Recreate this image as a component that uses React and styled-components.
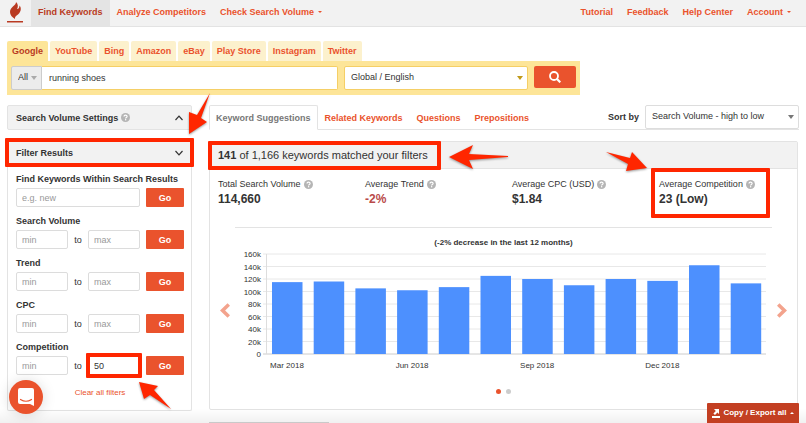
import React, { useState } from "react";
import styled, { createGlobalStyle, css } from "styled-components";

const colors = {
    accent: "#ea532d",
    dark: "#b93a22",
    mark: "#ff2600",
    text: "#333",
    line: "#e3e3e3",
};

const GlobalStyle = createGlobalStyle`
    * {
        box-sizing: border-box;
    }
    body {
        margin: 0;
        background: #fff;
        color: ${colors.text};
        font-family: "Liberation Sans", Arial, sans-serif;
        font-size: 9px;
        line-height: 12px;
    }
    button, input, select {
        font: inherit;
        color: inherit;
        margin: 0;
    }
    a {
        color: ${colors.accent};
        text-decoration: none;
    }
`;

const Header = styled.header`
    display: flex;
    height: 27px;
    padding-left: 7px;
    background: #f2f2f2;
    border-bottom: 1px solid ${colors.line};
`;

const Logo = styled.a`
    display: flex;
    width: 24px;
`;

const Nav = styled.nav`
    display: flex;
    margin-left: ${props => props.$right ? "auto" : "0"};
    padding-right: ${props => props.$right ? "8px" : "0"};
`;

const NavLink = styled.a`
    display: flex;
    align-items: center;
    gap: 4px;
    padding: 0 7px 2px;
    font-weight: bold;
    ${props => props.$active && css`
        color: ${colors.dark};
        background: #e4e4e4;
    `}
`;

const Caret = styled.span`
    border: 2px solid transparent;
    ${props => props.$up ? "border-bottom-color" : "border-top-color"}: currentColor;
    margin-top: ${props => props.$up ? "-2px" : "2px"};
`;

const Page = styled.main`
    padding: 14px 7px 0;
`;

const SearchForm = styled.form`
    max-width: 573px;
    margin-bottom: 10px;
`;

const EngineTabs = styled.div`
    display: flex;
    gap: 2px;
`;

const EngineTab = styled.button`
    height: 20px;
    padding: 0 5px;
    border: 0;
    border-radius: 2px 2px 0 0;
    font-weight: bold;
    color: ${props => props.$active ? colors.dark : colors.accent};
    background: ${props => props.$active ? "#fde598" : "#fcf1cd"};
`;

const SearchBar = styled.div`
    display: grid;
    grid-template-columns: 327px 1fr 42px;
    gap: 6px;
    padding: 5px 4px;
    background: #fde598;
`;

const QueryGroup = styled.div`
    display: flex;
`;

const SelectWrap = styled.span`
    position: relative;
    display: block;
    flex: none;
    &::after {
        content: "";
        position: absolute;
        right: 5px;
        top: 10px;
        border: 3px solid transparent;
        border-top: 4px solid ${props => props.$arrow};
        border-bottom: 0;
        pointer-events: none;
    }
`;

const Select = styled.select`
    appearance: none;
    display: block;
    width: 100%;
    height: 24px;
    padding: 0 12px 2px 6px;
    border: 1px solid ${props => props.$border};
    border-radius: ${props => props.$joined ? "2px 0 0 2px" : "2px"};
    background: ${props => props.$joined ? "#ececec" : "#fff"};
`;

const QueryInput = styled.input`
    flex: 1;
    min-width: 0;
    height: 24px;
    padding: 0 7px 1px;
    border: 1px solid #f5cf66;
    border-left: 0;
    border-radius: 0 2px 2px 0;
`;

const SearchButton = styled.button`
    display: flex;
    align-items: center;
    justify-content: center;
    height: 22px;
    padding: 0;
    border: 0;
    border-radius: 2px;
    color: #fff;
    background: ${colors.accent};
`;

const Columns = styled.div`
    display: grid;
    grid-template-columns: 185px minmax(0, 1fr);
    gap: 17px;
    align-items: start;
`;

const marked = css`
    position: relative;
    &::before {
        content: "";
        position: absolute;
        inset: ${props => props.$inset || "-2px"};
        border: 4px solid ${colors.mark};
        border-radius: 1px;
        pointer-events: none;
    }
`;

const PanelToggle = styled.button`
    display: flex;
    align-items: center;
    gap: 3px;
    width: 100%;
    height: 25px;
    padding: 0 8px;
    border: 1px solid ${colors.line};
    border-radius: 2px;
    font-weight: bold;
    text-align: left;
    background: #f2f2f2;
    svg:last-of-type {
        margin-left: auto;
    }
`;

const MarkedToggle = styled.div`
    ${marked}
`;

const FilterPanel = styled.section`
    margin-top: 10px;
    border: 1px solid ${colors.line};
    border-top: 0;
    border-radius: 2px;
    ${PanelToggle} {
        padding: 0 7px;
    }
`;

const Filters = styled.form`
    display: flex;
    flex-direction: column;
    gap: 8px;
    padding: 8px 7px 11px 8px;
`;

const FilterGroup = styled.fieldset`
    min-width: 0;
    margin: 0;
    padding: 0;
    border: 0;
`;

const FilterTitle = styled.legend`
    padding: 0 0 3px;
    font-weight: bold;
`;

const FilterRow = styled.div`
    display: flex;
    align-items: center;
`;

const Field = styled.span`
    display: flex;
    flex: 1;
    min-width: 0;
    ${props => props.$marked && marked}
`;

const FilterInput = styled.input`
    width: 100%;
    height: 19px;
    padding: 0 5px;
    border: 1px solid #dcdcdc;
    border-radius: 2px;
    background: #fff;
    &::placeholder {
        color: #999;
    }
`;

const To = styled.span`
    width: 20px;
    text-align: center;
`;

const GoButton = styled.button`
    width: 38px;
    height: 19px;
    margin-left: 6px;
    padding: 0;
    border: 0;
    border-radius: 1px;
    color: #fff;
    font-weight: bold;
    background: ${colors.accent};
`;

const ClearLink = styled.a`
    align-self: center;
    margin-top: 4px;
    font-size: 8px;
`;

const ResultBar = styled.div`
    display: flex;
    height: 25px;
    margin-bottom: 11px;
    border-bottom: 1px solid ${colors.line};
`;

const ResultTab = styled.a`
    display: flex;
    align-items: center;
    padding: 0 6px;
    margin-bottom: -1px;
    border: 1px solid transparent;
    border-radius: 2px 2px 0 0;
    font-weight: bold;
    ${props => props.$active && css`
        color: #777;
        background: #fff;
        border-color: ${colors.line};
        border-bottom-color: #fff;
    `}
`;

const SortLabel = styled.label`
    display: flex;
    align-items: center;
    gap: 6px;
    margin-left: auto;
    font-weight: bold;
    ${SelectWrap} {
        width: 154px;
        font-weight: normal;
    }
`;

const Panel = styled.section`
    margin-right: 1px;
    border: 1px solid ${colors.line};
    border-radius: 2px;
`;

const PanelTitle = styled.h1`
    display: flex;
    align-items: center;
    height: 27px;
    margin: 0;
    border-bottom: 1px solid ${colors.line};
    background: #f2f2f2;
    font-size: 11px;
    font-weight: normal;
`;

const MarkedTitle = styled.span`
    ${marked}
    padding: 6px 11px 7px 8px;
`;

const Stats = styled.dl`
    display: grid;
    grid-template-columns: repeat(3, 1fr) 138px;
    margin: 0;
    padding: 8px 0 20px 8px;
`;

const Stat = styled.div`
    justify-self: start;
    ${props => props.$marked && marked}
    dt {
        display: flex;
        align-items: center;
        gap: 3px;
        line-height: 14px;
    }
    dd {
        margin: 0;
        font-size: 12px;
        line-height: 16px;
        font-weight: bold;
        color: ${props => props.$down ? "#b94a48" : colors.text};
    }
`;

const Carousel = styled.div`
    display: flex;
    align-items: center;
    padding: 0 10px 15px;
`;

const CarouselButton = styled.button`
    display: flex;
    width: 10px;
    padding: 0;
    border: 0;
    background: none;
`;

const Slide = styled.div`
    flex: 1;
    min-width: 0;
    svg {
        display: block;
        width: 100%;
    }
`;

const SlideTitle = styled.h2`
    margin: 0 5px;
    padding: 9px 0 0;
    border-top: 1px solid ${colors.line};
    font-size: 8px;
    text-align: center;
`;

const Dots = styled.div`
    display: flex;
    justify-content: center;
    gap: 5px;
    padding-top: 18px;
`;

const Dot = styled.button`
    width: 5px;
    height: 5px;
    padding: 0;
    border: 0;
    border-radius: 50%;
    background: ${props => props.$active ? colors.accent : "#ccc"};
`;

const NextPanel = styled.div`
    width: 120px;
    height: 2px;
    margin-top: 12px;
    background: #d5d5d5;
`;

const BottomFade = styled.div`
    position: fixed;
    inset: auto 0 0;
    height: 14px;
    background: linear-gradient(rgba(0, 0, 0, 0), rgba(0, 0, 0, 0.06));
    pointer-events: none;
`;

const ChatButton = styled.button`
    position: fixed;
    left: 9px;
    bottom: 9px;
    display: flex;
    align-items: center;
    justify-content: center;
    width: 34px;
    height: 34px;
    padding: 0;
    border: 0;
    border-radius: 50%;
    background: ${colors.accent};
    box-shadow: 0 1px 14px rgba(0, 0, 0, 0.15);
`;

const ExportButton = styled.button`
    position: fixed;
    right: 7px;
    bottom: 0;
    display: flex;
    align-items: center;
    justify-content: center;
    gap: 3px;
    width: 92px;
    height: 20px;
    padding: 0;
    border: 0;
    border-radius: 1px 1px 0 0;
    color: #fff;
    font-size: 8px;
    font-weight: bold;
    background: #c33f22;
`;

const Arrow = styled.svg`
    position: absolute;
    left: ${props => props.$left};
    top: ${props => props.$top};
    fill: ${colors.mark};
    filter: drop-shadow(0 1px 1px rgba(0, 0, 0, 0.4));
    pointer-events: none;
`;

const engines = ["Google", "YouTube", "Bing", "Amazon", "eBay", "Play Store", "Instagram", "Twitter"];

const months = [
    { label: "Mar 2018", value: 115 },
    { value: 116 },
    { value: 105 },
    { label: "Jun 2018", value: 102 },
    { value: 107 },
    { value: 125 },
    { label: "Sep 2018", value: 120 },
    { value: 110 },
    { value: 120 },
    { label: "Dec 2018", value: 117 },
    { value: 142 },
    { value: 113 },
];

const HelpIcon = () => (
    <svg width="9" height="9" viewBox="0 0 18 18" aria-hidden="true">
        <circle cx="9" cy="9" r="9" fill="#b5b5b5" />
        <path d="M6 7.2C6 3.2 12.2 3.4 12.2 6.8C12.2 9 9.2 8.8 9.2 11" fill="none" stroke="#fff" strokeWidth="2.4" />
        <rect x="8" y="12.2" width="2.5" height="2.5" fill="#fff" />
    </svg>
);

const Chevron = ({ up }) => (
    <svg width="8" height="6" viewBox="0 0 8 6" fill="none" stroke="#333" strokeWidth="1.2" aria-hidden="true">
        <path d={up ? "M.5 5L4 1.2L7.5 5" : "M.5 1L4 4.8L7.5 1"} />
    </svg>
);

const SlideArrow = ({ next }) => (
    <svg width="10" height="15" viewBox="0 0 10 15" fill="none" stroke="#f3a38d" strokeWidth="3.6" aria-hidden="true">
        <path d={next ? "M1.2 1.5L7.4 7.5L1.2 13.5" : "M8.8 1.5L2.6 7.5L8.8 13.5"} />
    </svg>
);

const VolumeChart = () => {
    const ticks = [160, 140, 120, 100, 80, 60, 40, 20, 0];
    const y = (value) => 105 - value * 0.625;

    return (
        <svg viewBox="0 0 547 122" fontSize="8" fill="#333" role="img" aria-label="Search volume by month">
            {ticks.map(tick => (
                <g key={tick}>
                    <path d={`M33 ${y(tick)}H536`} stroke={tick ? "#e8e8e8" : "#ccc"} />
                    <text x="31" y={y(tick) + 3} textAnchor="end">{tick ? `${tick}k` : "0"}</text>
                </g>
            ))}
            <path d="M36.5 5V105" stroke="#ddd" />
            {months.map((month, i) => {
                const x = 42 + i * 41.7;
                return (
                    <g key={i}>
                        <rect x={x} y={y(month.value)} width="30.5" height={month.value * 0.625} fill="#4d90fe" />
                        {month.label && <text x={x + 15} y="119" textAnchor="middle">{month.label}</text>}
                    </g>
                );
            })}
        </svg>
    );
};

const RangeFilter = ({ title, max = "", highlight }) => {
    const [value, setValue] = useState(max);

    return (
        <FilterGroup>
            <FilterTitle>{title}</FilterTitle>
            <FilterRow>
                <Field><FilterInput placeholder="min" aria-label={`${title} min`} /></Field>
                <To>to</To>
                <Field $marked={highlight} $inset="-3px -2px">
                    <FilterInput
                        placeholder="max"
                        aria-label={`${title} max`}
                        value={value}
                        onChange={e => setValue(e.target.value)}
                    />
                    {highlight && (
                        <Arrow $left="50px" $top="25px" width="34" height="30">
                            <path d="M1 1L20 5L16 9L33 28L12 14L6 18Z" />
                        </Arrow>
                    )}
                </Field>
                <GoButton type="button">Go</GoButton>
            </FilterRow>
        </FilterGroup>
    );
};

const Sidebar = () => (
    <aside>
        <PanelToggle type="button">
            Search Volume Settings <HelpIcon />
            <Chevron up />
        </PanelToggle>
        <FilterPanel>
            <MarkedToggle $inset="-2px -3px">
                <PanelToggle type="button">Filter Results <Chevron /></PanelToggle>
                <Arrow $left="180px" $top="-48px" width="24" height="44">
                    <path d="M22 1L9 23L1 20L1 42L19 30L13 26Z" />
                </Arrow>
            </MarkedToggle>
            <Filters>
                <FilterGroup>
                    <FilterTitle>Find Keywords Within Search Results</FilterTitle>
                    <FilterRow>
                        <Field><FilterInput placeholder="e.g. new" aria-label="Find keywords within search results" /></Field>
                        <GoButton type="button">Go</GoButton>
                    </FilterRow>
                </FilterGroup>
                <RangeFilter title="Search Volume" />
                <RangeFilter title="Trend" />
                <RangeFilter title="CPC" />
                <RangeFilter title="Competition" max="50" highlight />
                <ClearLink href="#clear">Clear all filters</ClearLink>
            </Filters>
        </FilterPanel>
    </aside>
);

const Results = () => (
    <div>
        <ResultBar>
            <ResultTab href="#suggestions" $active>Keyword Suggestions</ResultTab>
            <ResultTab href="#related">Related Keywords</ResultTab>
            <ResultTab href="#questions">Questions</ResultTab>
            <ResultTab href="#prepositions">Prepositions</ResultTab>
            <SortLabel>
                Sort by
                <SelectWrap $arrow="#777">
                    <Select $border="#ddd"><option>Search Volume - high to low</option></Select>
                </SelectWrap>
            </SortLabel>
        </ResultBar>
        <Panel>
            <PanelTitle>
                <MarkedTitle>
                    <b>141</b> of 1,166 keywords matched your filters
                    <Arrow $left="238px" $top="1px" width="62" height="26">
                        <path d="M1 13L25 1L21 10L60 12L60 13L21 16L25 25Z" />
                    </Arrow>
                </MarkedTitle>
            </PanelTitle>
            <Stats>
                <Stat>
                    <dt>Total Search Volume <HelpIcon /></dt>
                    <dd>114,660</dd>
                </Stat>
                <Stat $down>
                    <dt>Average Trend <HelpIcon /></dt>
                    <dd>-2%</dd>
                </Stat>
                <Stat>
                    <dt>Average CPC (USD) <HelpIcon /></dt>
                    <dd>$1.84</dd>
                </Stat>
                <Stat $marked $inset="-9px -15px -11px -8px">
                    <dt>Average Competition <HelpIcon /></dt>
                    <dd>23 (Low)</dd>
                    <Arrow $left="-54px" $top="-26px" width="44" height="22">
                        <path d="M1 1L25 7L27 1L42 17L21 20L23 13Z" />
                    </Arrow>
                </Stat>
            </Stats>
            <Carousel>
                <CarouselButton type="button" aria-label="Previous"><SlideArrow /></CarouselButton>
                <Slide>
                    <SlideTitle>(-2% decrease in the last 12 months)</SlideTitle>
                    <VolumeChart />
                    <Dots>
                        <Dot type="button" aria-label="Slide 1" $active />
                        <Dot type="button" aria-label="Slide 2" />
                    </Dots>
                </Slide>
                <CarouselButton type="button" aria-label="Next"><SlideArrow next /></CarouselButton>
            </Carousel>
        </Panel>
        <NextPanel />
    </div>
);

const App = () => {
    const [engine, setEngine] = useState("Google");
    const [query, setQuery] = useState("running shoes");

    return (
        <>
            <GlobalStyle />
            <Header>
                <Logo href="#home" aria-label="Home">
                    <svg width="17" height="24" viewBox="0 0 17 24" fill={colors.dark}>
                        <path d="M9 2C9.500 5 3 7 3 12C3 15 5 17 8 19C7.500 17 9 16 11 14.500C15 11 14 7 12.500 5.500C12.500 8 11.500 9 10 9C11.500 6.500 11 4 9 2Z" />
                        <rect x="0" y="21" width="16" height="1.500" />
                    </svg>
                </Logo>
                <Nav>
                    <NavLink href="#find" $active>Find Keywords</NavLink>
                    <NavLink href="#analyze">Analyze Competitors</NavLink>
                    <NavLink href="#volume">Check Search Volume <Caret /></NavLink>
                </Nav>
                <Nav $right>
                    <NavLink href="#tutorial">Tutorial</NavLink>
                    <NavLink href="#feedback">Feedback</NavLink>
                    <NavLink href="#help">Help Center</NavLink>
                    <NavLink href="#account">Account <Caret /></NavLink>
                </Nav>
            </Header>
            <Page>
                <SearchForm onSubmit={e => e.preventDefault()}>
                    <EngineTabs>
                        {engines.map(name => (
                            <EngineTab type="button" key={name} $active={name === engine} onClick={() => setEngine(name)}>
                                {name}
                            </EngineTab>
                        ))}
                    </EngineTabs>
                    <SearchBar>
                        <QueryGroup>
                            <SelectWrap $arrow="#aaa">
                                <Select $joined $border="#ccc" aria-label="Category"><option>All</option></Select>
                            </SelectWrap>
                            <QueryInput aria-label="Keyword" value={query} onChange={e => setQuery(e.target.value)} />
                        </QueryGroup>
                        <SelectWrap $arrow="#c09a1a">
                            <Select $border="#f5cf66" aria-label="Location and language"><option>Global / English</option></Select>
                        </SelectWrap>
                        <SearchButton aria-label="Search">
                            <svg width="12" height="12" viewBox="0 0 12 12" fill="none" stroke="#fff" strokeWidth="1.8">
                                <circle cx="5" cy="5" r="4" />
                                <path d="M8 8L11.3 11.3" strokeWidth="2.2" />
                            </svg>
                        </SearchButton>
                    </SearchBar>
                </SearchForm>
                <Columns>
                    <Sidebar />
                    <Results />
                </Columns>
            </Page>
            <BottomFade />
            <ChatButton type="button" aria-label="Open chat">
                <svg width="16" height="18" viewBox="0 0 16 18">
                    <path d="M2 0H14Q16 0 16 2V18L12 16H2Q0 16 0 14V2Q0 0 2 0Z" fill="#fff" />
                    <path d="M2.5 11.5Q8 15 13.5 11.5" fill="none" stroke={colors.accent} strokeWidth="1.2" strokeLinecap="round" />
                </svg>
            </ChatButton>
            <ExportButton type="button">
                <svg width="8" height="9" viewBox="0 0 8 9" fill="#fff" aria-hidden="true">
                    <path d="M2 0H7V5L5.4 3.6L3 6L1.4 4.4L3.8 2Z" />
                    <rect y="7" width="8" height="2" />
                </svg>
                Copy / Export all
                <Caret $up />
            </ExportButton>
        </>
    );
};

export default App;
